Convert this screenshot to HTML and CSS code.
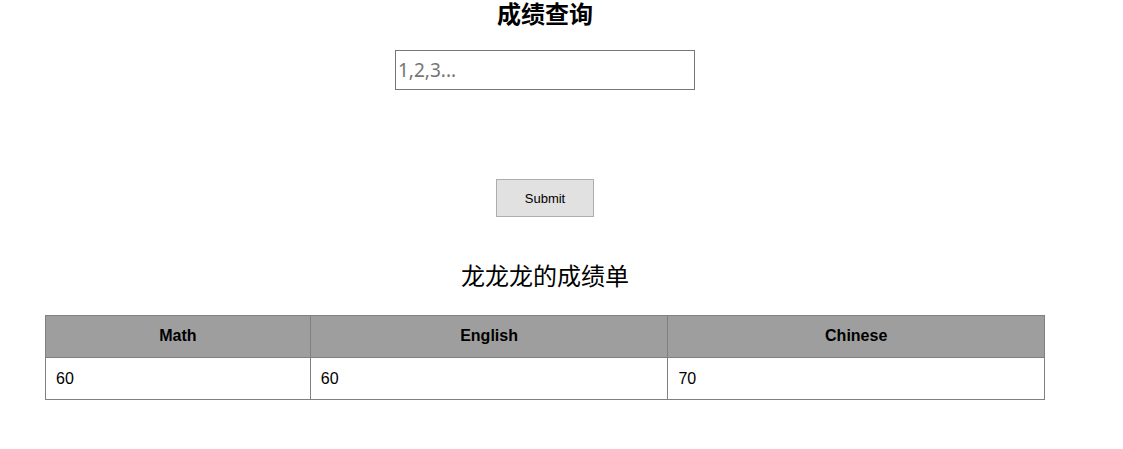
FILE: index.html
```html
<!DOCTYPE html>
<html>
<head>
<meta charset="utf-8">
<link rel="stylesheet" href="styles.css">
</head>
<body>
<div class="page">
  <h2 class="title">成绩查询</h2>
  <div class="form">
    <input class="query" type="text" placeholder="1,2,3...">
    <button class="submit">Submit</button>
  </div>
  <h3 class="subtitle">龙龙龙的成绩单</h3>
  <table class="scores">
    <thead>
      <tr><th class="c1">Math</th><th class="c2">English</th><th class="c3">Chinese</th></tr>
    </thead>
    <tbody>
      <tr><td>60</td><td>60</td><td>70</td></tr>
    </tbody>
  </table>
</div>
</body>
</html>
```
FILE: styles.css
```css
html, body {
  margin: 0;
  padding: 0;
  background: #fff;
}
body {
  font-family: "Liberation Sans", "Noto Sans CJK SC", sans-serif;
  color: #000;
}
.page {
  width: 1000px;
  margin-left: 45px;
  display: flex;
  flex-direction: column;
  align-items: center;
}
.title {
  margin: 0;
  padding-top: 1px;
  height: 29px;
  line-height: 28px;
  font-size: 24px;
  font-weight: bold;
}
.form {
  margin-top: 20px;
  display: flex;
  flex-direction: column;
  align-items: center;
}
.query {
  box-sizing: border-box;
  width: 300px;
  height: 40px;
  margin: 0;
  padding: 0 2px;
  border: 1px solid #767676;
  font-family: "Noto Sans", "DejaVu Sans", sans-serif;
  font-size: 19px;
}
.query::placeholder {
  color: #757575;
}
.submit {
  box-sizing: border-box;
  margin-top: 89px;
  width: 98px;
  height: 38px;
  padding: 1px 0 0 0;
  background: #e1e1e1;
  border: 1px solid #adadad;
  border-radius: 0;
  font-family: "Liberation Sans", sans-serif;
  font-size: 13px;
  color: #000;
}
.subtitle {
  margin: 43px 0 0 0;
  height: 34px;
  line-height: 34px;
  font-size: 24px;
  font-weight: normal;
}
.scores {
  margin-top: 21px;
  width: 1000px;
  border-collapse: collapse;
  font-size: 16px;
}
.scores th, .scores td {
  border: 1px solid #808080;
  height: 42px;
  padding: 0 10px;
  box-sizing: border-box;
}
.scores th {
  background: #9e9e9e;
  font-weight: bold;
  text-align: center;
  padding-bottom: 2px;
}
.scores td {
  text-align: left;
}
.c1 { width: 265px; }
.c2 { width: 358px; }
.c3 { width: 377px; }
```
